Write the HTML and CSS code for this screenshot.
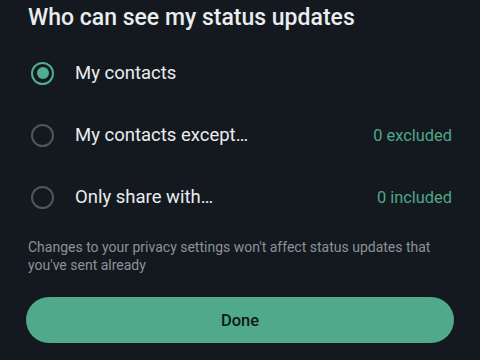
FILE: index.html
```html
<!DOCTYPE html>
<html lang="en">
<head>
    <meta charset="UTF-8">
    <meta name="viewport" content="width=device-width, initial-scale=1.0">
    <title>Status privacy</title>
    <link rel="stylesheet" href="styles.css">
</head>
<body>

<!-- Bottom sheet: who can see my status -->
<div class="sheet">
    <h1 class="title">Who can see my status updates</h1>

    <div class="options">
        <label class="option">
            <span class="radio checked"></span>
            <span class="label">My contacts</span>
        </label>
        <label class="option">
            <span class="radio"></span>
            <span class="label">My contacts except…</span>
            <span class="count">0 excluded</span>
        </label>
        <label class="option">
            <span class="radio"></span>
            <span class="label">Only share with…</span>
            <span class="count">0 included</span>
        </label>
    </div>

    <p class="note">Changes to your privacy settings won't affect status updates that you've sent already</p>

    <button class="done">Done</button>
</div>

</body>
</html>
```

FILE: styles.css
```css
body {
    margin: 0;
    background-color: #141920;
    font-family: Roboto, "Noto Sans", sans-serif;
    color: #e9edef;
}

/* Sheet container */
.sheet {
    padding: 0 26px 0 28px;
    display: flex;
    flex-direction: column;
}

.title {
    font-size: 23px;
    font-weight: 500;
    margin: 4px 0 0 0;
    line-height: 28px;
}

/* Radio options */
.options {
    display: flex;
    flex-direction: column;
    margin-top: 10px;
}
.option {
    display: flex;
    align-items: center;
    height: 62px;
}
.radio {
    width: 19px;
    height: 19px;
    border: 2px solid #50565c;
    border-radius: 50%;
    margin-left: 3px;
    margin-right: 21px;
    flex-shrink: 0;
    position: relative;
}
.radio.checked {
    border-color: #4fae8c;
}
.radio.checked::after {
    content: "";
    position: absolute;
    left: 3.5px;
    top: 3.5px;
    width: 12px;
    height: 12px;
    border-radius: 50%;
    background-color: #4fae8c;
}
.label {
    font-size: 18.5px;
    flex: 1;
}
.count {
    font-size: 16.4px;
    color: #4fa886;
    margin-right: 2px;
}

/* Footnote */
.note {
    font-size: 14px;
    line-height: 18px;
    color: #8b9197;
    margin: 10px 0 0 0;
}

.done {
    margin: 23px 0 0 -2px;
    height: 46px;
    border: none;
    border-radius: 23px;
    background-color: #4fa98a;
    color: #0f1a15;
    font-family: Roboto, "Noto Sans", sans-serif;
    font-size: 16.5px;
    font-weight: 500;
}
```
